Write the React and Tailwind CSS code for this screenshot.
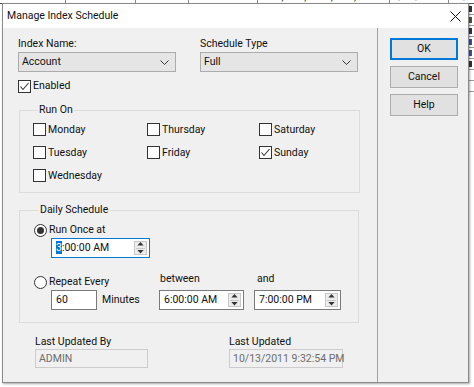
import React from "react";

const Check = ({ checked }) => (
  <span className="w-[13px] h-[13px] border border-[#333] bg-white flex items-center justify-center shrink-0">
    {checked && (
      <svg width="11" height="11" viewBox="0 0 11 11">
        <polyline points="1.5,5.5 4,8.5 9.5,2" fill="none" stroke="#333" strokeWidth="1.1" />
      </svg>
    )}
  </span>
);

const CheckItem = ({ label, checked }) => (
  <div className="flex items-center gap-[2px] h-[23px]">
    <Check checked={checked} />
    <span>{label}</span>
  </div>
);

const Radio = ({ on }) => (
  <span className="w-[13px] h-[13px] rounded-full border border-[#333] bg-white flex items-center justify-center shrink-0">
    {on && <span className="w-[7px] h-[7px] rounded-full bg-[#333]" />}
  </span>
);

const Spinner = () => (
  <span className="w-[13px] h-[14px] border border-[#c8c8c8] bg-[#ececec] flex flex-col items-center justify-center gap-[2px] shrink-0">
    <svg width="7" height="4" viewBox="0 0 7 4"><polygon points="3.5,0 7,4 0,4" fill="#333" /></svg>
    <span className="w-[9px] h-px bg-[#c8c8c8]" />
    <svg width="7" height="4" viewBox="0 0 7 4"><polygon points="0,0 7,0 3.5,4" fill="#333" /></svg>
  </span>
);

const Dropdown = ({ value }) => (
  <div className="h-[20px] mt-px bg-[#e5e5e5] border border-[#acacac] flex items-center justify-between pl-[3px] pr-[6px]">
    <span>{value}</span>
    <svg width="9" height="5" viewBox="0 0 9 5">
      <polyline points="0.5,0.5 4.5,4.5 8.5,0.5" fill="none" stroke="#333" strokeWidth="1" />
    </svg>
  </div>
);

const TimeBox = ({ children, w, selected }) => (
  <div
    className={`h-[20px] ${w} bg-white border flex items-center justify-between pl-[3px] pr-[2px] ${
      selected ? "border-[#0078d7]" : "border-[#7a7a7a]"
    }`}
  >
    <span className="pl-[1px]">{children}</span>
    <Spinner />
  </div>
);

const Btn = ({ children, primary }) => (
  <button
    className={`w-[68px] h-[22px] bg-[#e1e1e1] flex items-center justify-center ${
      primary ? "border-2 border-[#0078d7]" : "border border-[#adadad]"
    }`}
  >
    {children}
  </button>
);

export default function App() {
  return (
    <div className="relative w-[474px] h-[387px] bg-white overflow-hidden font-['Roboto',sans-serif] text-[10.5px] leading-[14px] text-[#111] whitespace-nowrap">
      {/* spreadsheet behind the dialog */}
      <div className="flex h-[14px] -mt-[10px] border-b border-[#555] text-[11px] text-[#222]">
        <div className="w-[70px] border-r border-[#888]" />
        <div className="w-[74px] border-r border-[#888] pl-[2px]">Incremental</div>
        <div className="w-[56px] border-r border-[#888] pl-[2px]">Yes</div>
        <div className="w-[72px] border-r border-[#888] pl-[2px]">12:00 AM</div>
        <div className="w-[140px] border-r border-[#888] pl-[2px]">Mon, Tue, Wed, Thu, Fr</div>
        <div className="w-[62px] border-r border-[#888] pl-[2px]">7/13/2011</div>
        <div className="flex-1 pl-[2px]">10/1</div>
      </div>
      <div className="ml-[468px] flex flex-col">
        {["#335", "#553", "#335", "#35a", "#35a", "#333", "#fff", "#fff"].map((c, i) => (
          <div key={i} className="h-[11px] border-b border-[#999] border-l flex items-center">
            <span className="w-[3px] h-[6px]" style={{ background: c }} />
          </div>
        ))}
      </div>

      {/* dialog */}
      <div className="absolute left-[2px] top-[3px] w-[467px] h-[380px] border border-[#8a8a8a] bg-[#f0f0f0] flex flex-col shadow-[1px_1px_2px_rgba(0,0,0,0.35)]">
        <div className="h-[24px] bg-white flex items-center justify-between pl-[4px] pr-[7px]">
          <span>Manage Index Schedule</span>
          <svg width="11" height="11" viewBox="0 0 11 11">
            <path d="M0.5 0.5 L10.5 10.5 M10.5 0.5 L0.5 10.5" stroke="#111" strokeWidth="1" />
          </svg>
        </div>

        <div className="flex flex-1">
          {/* left */}
          <div className="w-[374px] pl-[15px] pt-[9px]">
            <div className="grid grid-cols-[158px_158px] gap-x-[24px]">
              <div>
                <div>Index Name:</div>
                <Dropdown value="Account" />
              </div>
              <div>
                <div>Schedule Type</div>
                <Dropdown value="Full" />
              </div>
            </div>

            <div className="mt-[7px] flex items-center gap-[2px] h-[14px]">
              <Check checked />
              <span>Enabled</span>
            </div>

            <fieldset className="mt-[10px] ml-px w-[341px] border border-[#dcdcdc] pl-[13px] pt-px pb-[5px]">
              <legend className="ml-[5px] px-px">Run On</legend>
              <div className="grid grid-cols-[114px_112px_1fr]">
                <CheckItem label="Monday" />
                <CheckItem label="Thursday" />
                <CheckItem label="Saturday" />
                <CheckItem label="Tuesday" />
                <CheckItem label="Friday" />
                <CheckItem label="Sunday" checked />
                <CheckItem label="Wednesday" />
              </div>
            </fieldset>

            <fieldset className="mt-[10px] ml-px w-[340px] border border-[#dcdcdc] pl-[14px] pt-[6px] pb-[12px]">
              <legend className="ml-[5px] px-px">Daily Schedule</legend>
              <div className="flex items-center gap-[2px] h-[14px]">
                <Radio on />
                <span>Run Once at</span>
              </div>
              <div className="mt-px ml-[17px]">
                <TimeBox w="w-[99px]" selected>
                  <span className="bg-[#0078d7] text-white">3</span>:00:00 AM
                </TimeBox>
              </div>

              <div className="mt-[14px] flex items-start">
                <div className="w-[125px] mt-[3px] flex items-center gap-[2px] h-[14px]">
                  <Radio />
                  <span>Repeat Every</span>
                </div>
                <div className="w-[96px] pl-px">between</div>
                <div className="pl-[2px]">and</div>
              </div>
              <div className="mt-px ml-[17px] flex items-center">
                <div className="w-[46px] h-[20px] bg-white border border-[#7a7a7a] flex items-center pl-[4px]">60</div>
                <span className="ml-[5px] w-[57px]">Minutes</span>
                <TimeBox w="w-[85px]">6:00:00 AM</TimeBox>
                <div className="ml-[10px]">
                  <TimeBox w="w-[87px]">7:00:00 PM</TimeBox>
                </div>
              </div>
            </fieldset>

            <div className="mt-[12px] ml-[17px] grid grid-cols-[113px_114px] gap-x-[81px]">
              <div>
                <div>Last Updated By</div>
                <div className="h-[19px] border border-[#cccccc] flex items-center pl-[3px] text-[#6d6d6d]">ADMIN</div>
              </div>
              <div>
                <div>Last Updated</div>
                <div className="h-[19px] border border-[#cccccc] flex items-center pl-[3px] text-[#6d6d6d]">10/13/2011 9:32:54 PM</div>
              </div>
            </div>
          </div>

          {/* right */}
          <div className="flex-1 border-l border-[#a0a0a0] pl-[12px] pt-[10px] flex flex-col gap-[6px]">
            <Btn primary>OK</Btn>
            <Btn>Cancel</Btn>
            <Btn>Help</Btn>
          </div>
        </div>
      </div>
    </div>
  );
}
